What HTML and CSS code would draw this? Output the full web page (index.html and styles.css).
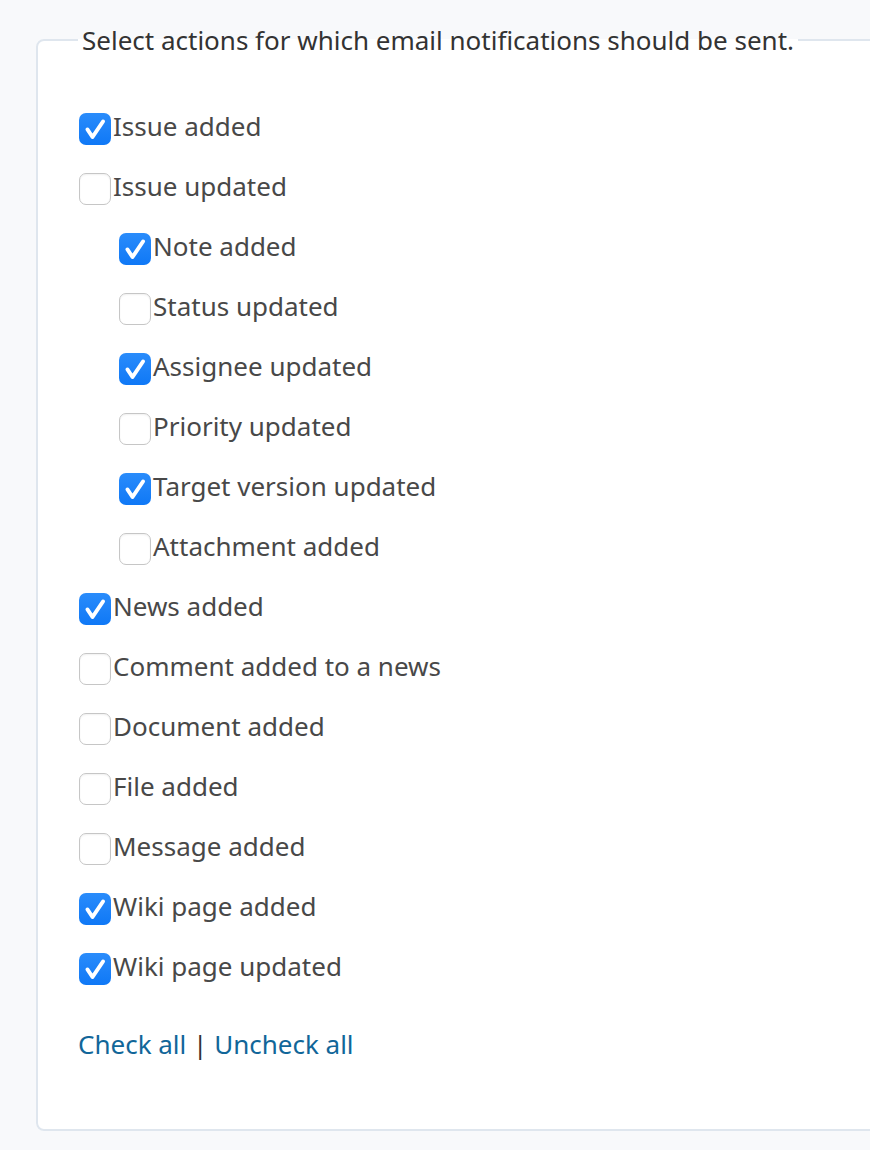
FILE: index.html
```html
<!DOCTYPE html>
<html lang="en">
<head>
  <meta charset="UTF-8">
  <title>Email notifications</title>
  <link rel="stylesheet" href="styles.css">
</head>
<body>
<main>
  <fieldset class="box">
    <legend>Select actions for which email notifications should be sent.</legend>

    <label class="opt"><span class="check on"><svg viewBox="0 0 32 32"><path d="M8.5 16.5 L13.5 24 L24 8.5"/></svg></span>Issue added</label>
    <label class="opt"><span class="check"></span>Issue updated</label>
    <label class="opt sub"><span class="check on"><svg viewBox="0 0 32 32"><path d="M8.5 16.5 L13.5 24 L24 8.5"/></svg></span>Note added</label>
    <label class="opt sub"><span class="check"></span>Status updated</label>
    <label class="opt sub"><span class="check on"><svg viewBox="0 0 32 32"><path d="M8.5 16.5 L13.5 24 L24 8.5"/></svg></span>Assignee updated</label>
    <label class="opt sub"><span class="check"></span>Priority updated</label>
    <label class="opt sub"><span class="check on"><svg viewBox="0 0 32 32"><path d="M8.5 16.5 L13.5 24 L24 8.5"/></svg></span>Target version updated</label>
    <label class="opt sub"><span class="check"></span>Attachment added</label>
    <label class="opt"><span class="check on"><svg viewBox="0 0 32 32"><path d="M8.5 16.5 L13.5 24 L24 8.5"/></svg></span>News added</label>
    <label class="opt"><span class="check"></span>Comment added to a news</label>
    <label class="opt"><span class="check"></span>Document added</label>
    <label class="opt"><span class="check"></span>File added</label>
    <label class="opt"><span class="check"></span>Message added</label>
    <label class="opt"><span class="check on"><svg viewBox="0 0 32 32"><path d="M8.5 16.5 L13.5 24 L24 8.5"/></svg></span>Wiki page added</label>
    <label class="opt"><span class="check on"><svg viewBox="0 0 32 32"><path d="M8.5 16.5 L13.5 24 L24 8.5"/></svg></span>Wiki page updated</label>

    <p class="links"><a href="#">Check all</a> | <a href="#">Uncheck all</a></p>
  </fieldset>
</main>
</body>
</html>
```

FILE: styles.css
```css
html, body {
  overflow-x: hidden;
}

body {
  margin: 0;
  padding: 20px 0 0 36px;
  background: #f8f9fb;
  font-family: "Noto Sans", "Open Sans", sans-serif;
  font-size: 26px;
  color: #484848;
}

.box {
  width: 900px;
  margin: 0;
  padding: 36px 0 65px 40px;
  background: #fff;
  border: 2px solid #dfe6ee;
  border-radius: 8px;
}

.box legend {
  padding: 0 4px;
  line-height: 40px;
  color: #333;
}

.opt {
  display: flex;
  align-items: center;
  height: 60px;
}

.opt.sub {
  padding-left: 40px;
}

.check {
  box-sizing: border-box;
  width: 32px;
  height: 32px;
  margin: 5px 2px 0 1px;
  border: 1px solid #c6c6c6;
  border-radius: 7px;
  background: #fff;
  box-shadow: inset 0 1px 2px rgba(0, 0, 0, 0.06);
}

.check.on {
  border: none;
  background: linear-gradient(#2a8cfb, #0f78f6);
  box-shadow: none;
}

.check svg {
  display: block;
  width: 32px;
  height: 32px;
}

.check path {
  fill: none;
  stroke: #fff;
  stroke-width: 4;
  stroke-linecap: round;
  stroke-linejoin: round;
}

.links {
  margin: 28px 0 0;
  line-height: 40px;
  color: #333;
}

.links a {
  color: #169;
  text-decoration: none;
}
```
